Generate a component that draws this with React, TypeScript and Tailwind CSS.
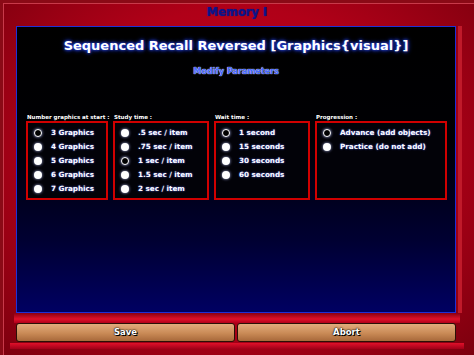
// Memory I – écran de paramètres
const columns = [
  {
    label: "Number graphics at start :",
    width: "w-[82px]",
    items: ["3 Graphics", "4 Graphics", "5 Graphics", "6 Graphics", "7 Graphics"],
    selected: 0,
  },
  {
    label: "Study time :",
    width: "w-[96px]",
    items: [".5 sec / item", ".75 sec / item", "1 sec / item", "1.5 sec / item", "2 sec / item"],
    selected: 2,
  },
  {
    label: "Wait time :",
    width: "w-[96px]",
    items: ["1 second", "15 seconds", "30 seconds", "60 seconds"],
    selected: 0,
  },
  {
    label: "Progression :",
    width: "w-[132px]",
    items: ["Advance (add objects)", "Practice (do not add)"],
    selected: 0,
  },
];

function Radio({ on }: { on: boolean }) {
  if (on) {
    return (
      <span className="w-[8px] h-[8px] shrink-0 rounded-full border-[1.5px] border-white bg-black shadow-[0_0_3px_rgba(190,200,255,0.9)]" />
    );
  }
  return <span className="w-[8px] h-[8px] shrink-0 rounded-full bg-white shadow-[0_0_3px_rgba(190,200,255,0.9)]" />;
}

export default function App() {
  return (
    <div className="w-[474px] h-[355px] overflow-hidden font-['DejaVu_Sans',sans-serif] bg-[radial-gradient(ellipse_at_50%_45%,#c8001c_0%,#b00018_55%,#7c000e_100%)] shadow-[inset_3px_3px_0_#8a0a16,inset_4px_4px_0_#c83a4a]">
      {/* Titre */}
      <div className="h-[26px] flex items-center justify-center">
        <span className="text-[11.5px] font-bold text-[#0c1488] leading-none [text-shadow:0_0_1px_#0c1488]">Memory I</span>
      </div>

      <div className="flex">
        <div className="w-[16px]" />
        {/* Panneau principal */}
        <div className="w-[440px] h-[287px] border-[1.5px] border-[#2030d8] bg-[linear-gradient(to_bottom,#000000_0%,#000004_40%,#000032_75%,#000062_100%)]">
          <div className="pt-[11px] text-center">
            <p className="text-[13px] font-bold leading-[16px] text-white [text-shadow:0_0_3px_#3050ff,0_0_5px_#2040ff]">
              Sequenced Recall Reversed [Graphics{"{"}visual{"}"}]
            </p>
            <p className="mt-[13px] text-[8px] font-bold leading-[10px] text-[#4468ff] [text-shadow:0_0_1px_#dfe6ff,0_0_1px_#dfe6ff]">
              Modify Parameters
            </p>
          </div>

          {/* Colonnes de paramètres */}
          <div className="flex gap-[5px] pl-[9px] mt-[36px]">
            {columns.map((col) => (
              <div key={col.label} className={col.width}>
                <p className="pl-[1px] text-[5.5px] font-bold leading-[8px] text-white whitespace-nowrap">{col.label}</p>
                <div className="h-[79px] border-2 border-[#d00000] bg-[#020208] pt-[3px] pl-[6px]">
                  {col.items.map((item, i) => (
                    <div key={item} className="h-[14px] flex items-center gap-[9px]">
                      <Radio on={i === col.selected} />
                      <span className="text-[7.2px] font-bold text-white whitespace-nowrap [text-shadow:0_0_2px_#5a6aff]">
                        {item}
                      </span>
                    </div>
                  ))}
                </div>
              </div>
            ))}
          </div>
        </div>
        <div className="w-[2px]" />
        <div className="w-[4px] h-[287px] bg-[#c01a2a]" />
      </div>

      {/* Bande rouge brillante */}
      <div className="mx-[14px] h-[10px] bg-[linear-gradient(to_bottom,#8a0010,#e0102a_60%,#b0001a)]" />

      {/* Boutons */}
      <div className="flex mx-[16px] w-[440px] h-[19px] gap-[2px]">
        {["Save", "Abort"].map((label) => (
          <button
            key={label}
            className="flex-1 rounded-[3px] border border-[#2a1006] bg-[linear-gradient(to_bottom,#e2ab7c,#c98a56_55%,#a8683a)] flex items-center justify-center"
          >
            <span className="text-[8.5px] font-bold text-white [text-shadow:0_0_2px_#000,0_0_1px_#000,1px_1px_0_#000]">
              {label}
            </span>
          </button>
        ))}
      </div>
      <div className="mx-[10px] mt-[1px] h-[6px] bg-[linear-gradient(to_bottom,#e0102a,#a00018)]" />
    </div>
  );
}
